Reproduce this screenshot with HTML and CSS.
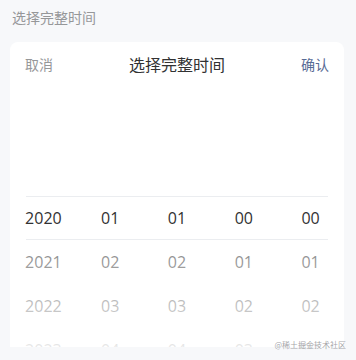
FILE: index.html
```html
<!DOCTYPE html>
<html lang="zh">
<head>
<meta charset="utf-8">
<link rel="stylesheet" href="styles.css">
</head>
<body>
<div class="page">
  <h2 class="block-title">选择完整时间</h2>
  <div class="card">
    <div class="toolbar">
      <button class="btn cancel">取消</button>
      <div class="title">选择完整时间</div>
      <button class="btn confirm">确认</button>
    </div>
    <div class="picker">
      <div class="columns">
        <ul class="col"><li>2020</li><li>2021</li><li>2022</li><li>2023</li></ul>
        <ul class="col"><li>01</li><li>02</li><li>03</li><li>04</li></ul>
        <ul class="col"><li>01</li><li>02</li><li>03</li><li>04</li></ul>
        <ul class="col"><li>00</li><li>01</li><li>02</li><li>03</li></ul>
        <ul class="col"><li>00</li><li>01</li><li>02</li><li>03</li></ul>
      </div>
      <div class="mask"></div>
      <div class="frame"></div>
    </div>
  </div>
  <div class="watermark">@稀土掘金技术社区</div>
</div>
</body>
</html>
```
FILE: styles.css
```css
html, body {
  margin: 0;
  padding: 0;
  background: #f7f8fa;
  font-family: "Open Sans", "Noto Sans CJK SC", sans-serif;
}
.page {
  position: relative;
  height: 360px;
  overflow: hidden;
}
.block-title {
  margin: 0;
  padding: 9px 12px;
  font-size: 14px;
  line-height: 16px;
  font-weight: 400;
  color: #969799;
  font-family: "Noto Sans CJK SC", sans-serif;
}
.card {
  margin: 8px 12px 0 10px;
  height: 305px;
  background: #fff;
  border-radius: 8px 8px 0 0;
  overflow: hidden;
}
.toolbar {
  display: flex;
  align-items: center;
  justify-content: space-between;
  height: 44px;
}
.btn {
  height: 100%;
  padding: 0 15px;
  border: 0;
  background: transparent;
  font-size: 14px;
  font-family: "Noto Sans CJK SC", sans-serif;
  cursor: pointer;
}
.cancel { color: #969799; }
.confirm { color: #576b95; }
.title {
  font-size: 16px;
  line-height: 20px;
  color: #323233;
  font-family: "Noto Sans CJK SC", sans-serif;
}
.picker {
  position: relative;
  height: 264px;
}
.columns {
  display: flex;
  height: 100%;
}
.col {
  flex: 1;
  margin: 0;
  padding: 110px 0 0;
  list-style: none;
}
.col li {
  height: 44px;
  display: flex;
  align-items: center;
  justify-content: center;
  font-size: 16px;
  color: #323233;
}
.mask {
  position: absolute;
  inset: 0;
  background-image:
    linear-gradient(180deg, rgba(255,255,255,.9), rgba(255,255,255,.4)),
    linear-gradient(0deg, rgba(255,255,255,.9), rgba(255,255,255,.4));
  background-repeat: no-repeat;
  background-position: top, bottom;
  background-size: 100% 110px;
  pointer-events: none;
}
.frame {
  position: absolute;
  top: 110px;
  left: 16px;
  right: 16px;
  height: 42px;
  border-top: 1px solid #ebedf0;
  border-bottom: 1px solid #ebedf0;
  pointer-events: none;
}
.watermark {
  position: absolute;
  right: 10px;
  top: 340px;
  font-size: 8px;
  line-height: 10px;
  color: rgba(140,140,145,.8);
  font-family: "Noto Sans CJK SC", sans-serif;
}
```
